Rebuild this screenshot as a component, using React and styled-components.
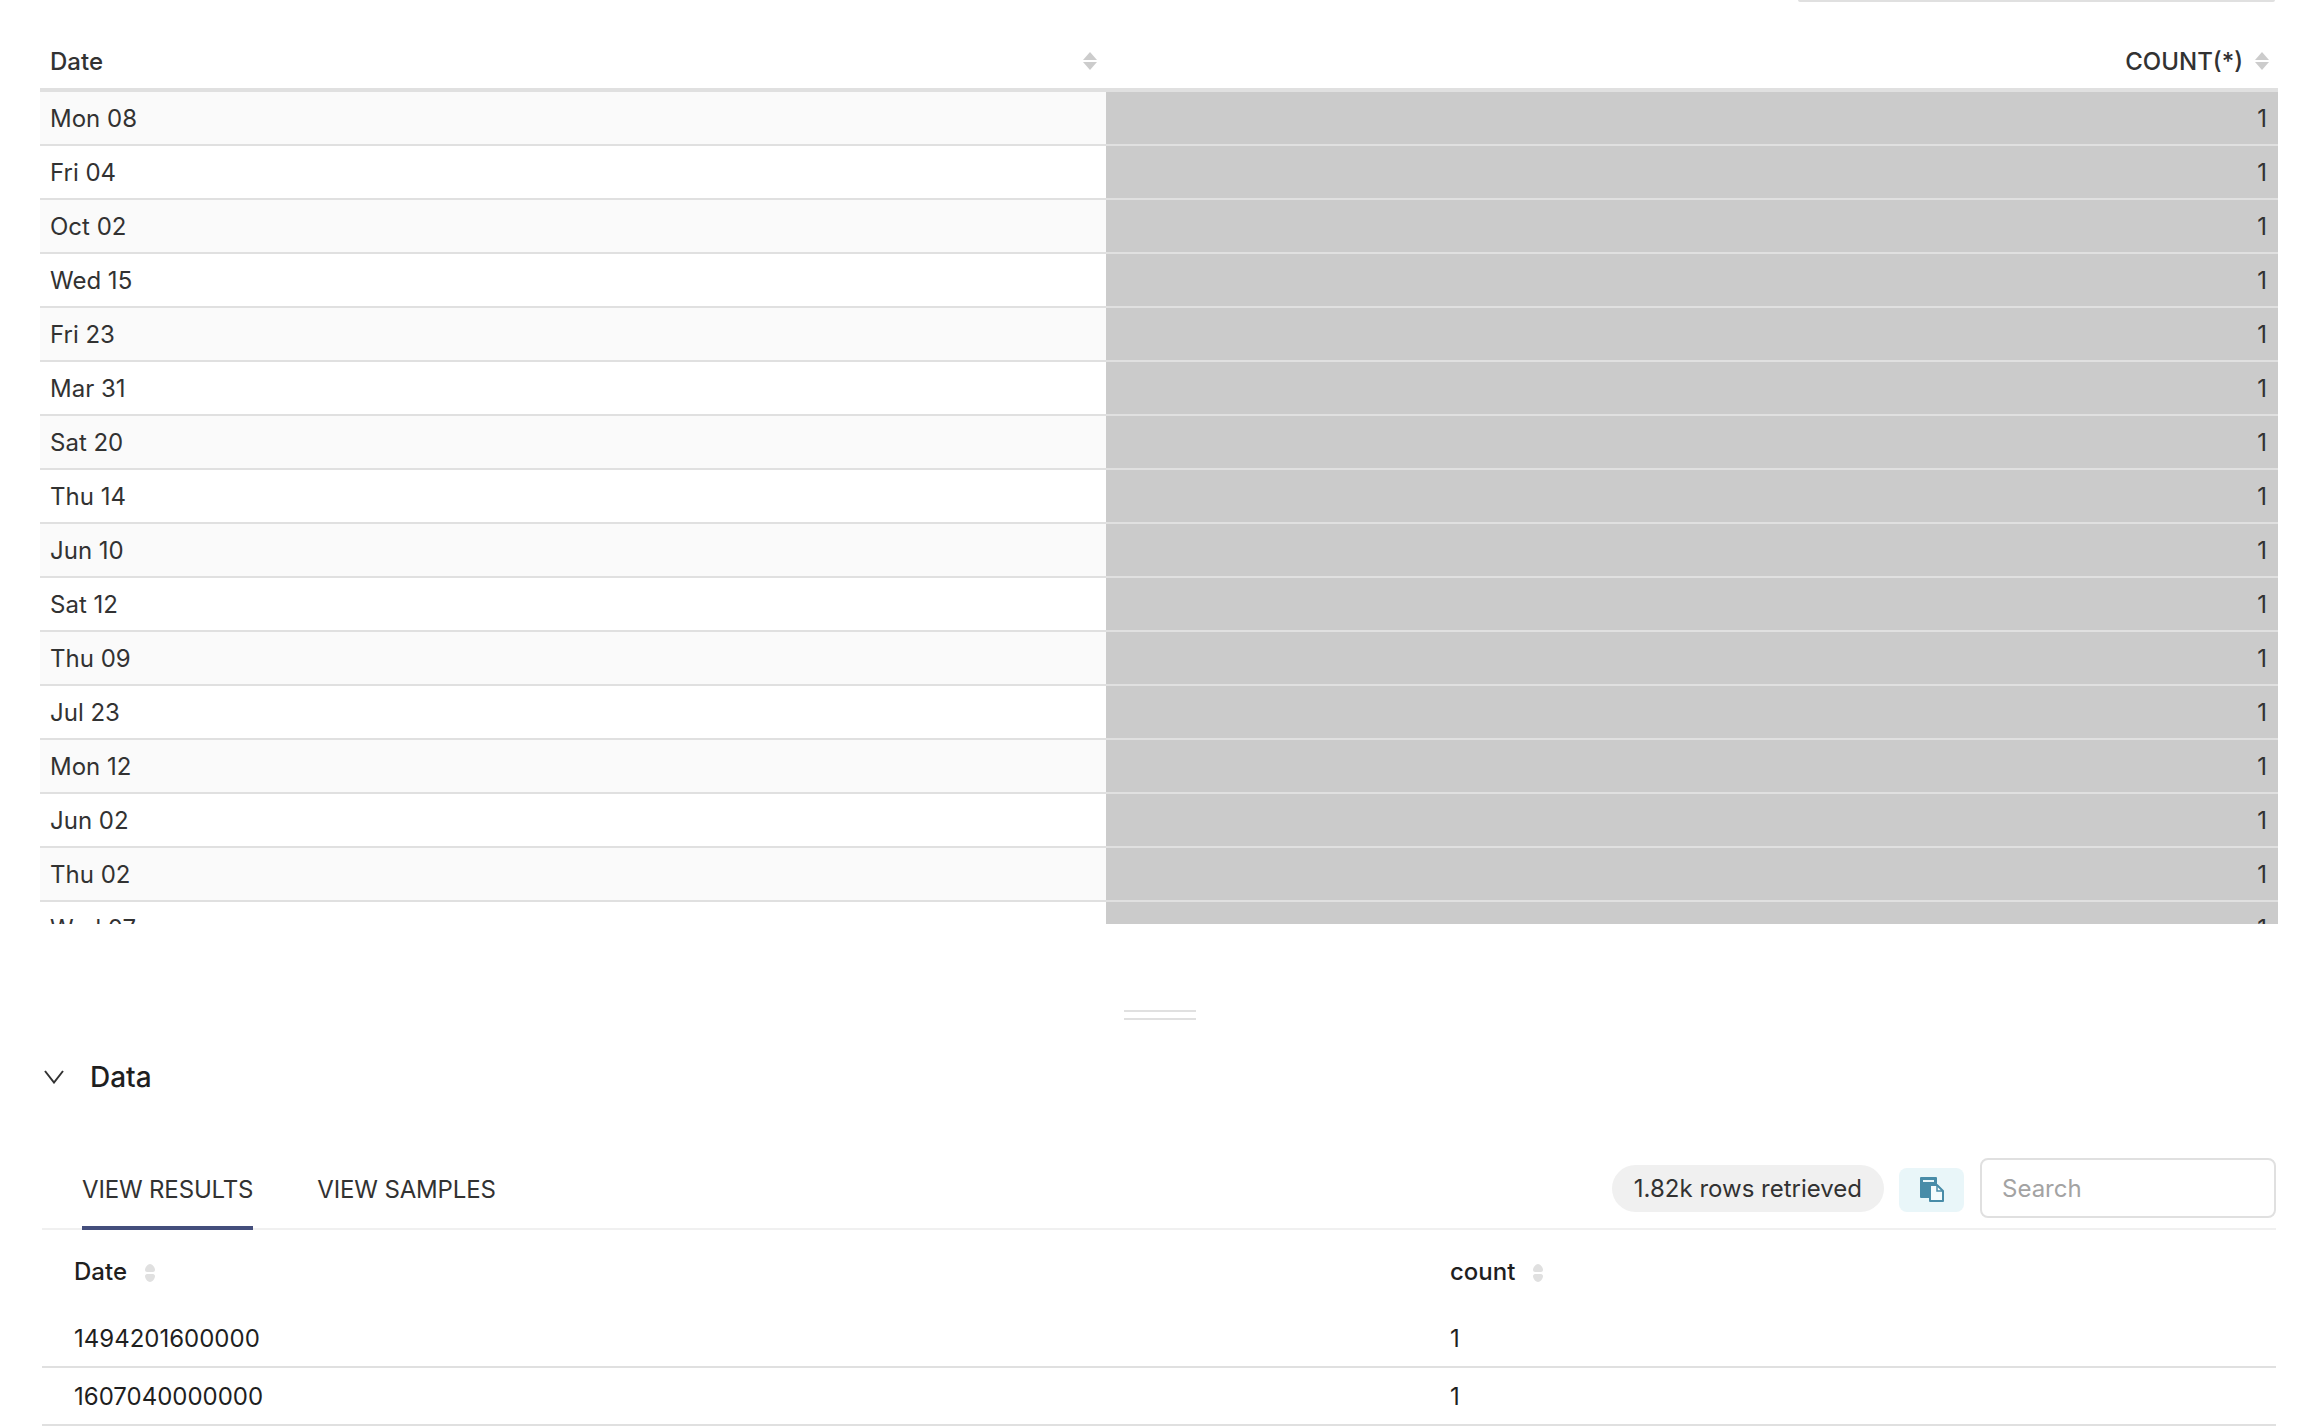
import React from 'react'
import styled, { createGlobalStyle } from 'styled-components'

const GlobalStyle = createGlobalStyle`
  html, body {
    margin: 0;
    padding: 0;
    background: #fff;
    font-family: Inter, "Noto Sans", sans-serif;
    color: #323232;
  }
`

const Page = styled.div`
  width: 2320px;
  height: 1426px;
  overflow: hidden;
  display: flex;
  flex-direction: column;
`

const CutOffInput = styled.div`
  align-self: flex-end;
  width: 477px;
  height: 2px;
  margin-right: 45px;
  background: #e0e0e0;
  border-radius: 0 0 4px 4px;
`

const ChartTable = styled.div`
  width: 2238px;
  height: 922px;
  margin-left: 40px;
  overflow: hidden;
`

const ChartHead = styled.div`
  display: grid;
  grid-template-columns: 1066px 1172px;
  height: 86px;
  border-bottom: 4px solid #e0e0e0;
  font-size: 24px;
  font-weight: 550;
`

const ChartHeadCell = styled.div`
  display: flex;
  align-items: center;
  justify-content: ${(p) => (p.$right ? 'flex-end' : 'space-between')};
  gap: 12px;
  padding: 32px 9px 0 10px;
`

const ChartRow = styled.div`
  display: grid;
  grid-template-columns: 1066px 1172px;
  height: 52px;
  border-bottom: 2px solid #e0e0e0;
  background: ${(p) => (p.$odd ? '#fafafa' : '#fff')};
  font-size: 24px;
`

const DateCell = styled.div`
  display: flex;
  align-items: center;
  padding-left: 10px;
`

const BarCell = styled.div`
  display: flex;
  align-items: center;
  justify-content: flex-end;
  padding-right: 11px;
  background: #cbcbcb;
`

const Splitter = styled.div`
  align-self: center;
  width: 72px;
  height: 6px;
  margin-top: 86px;
  border-top: 2px solid #e0e0e0;
  border-bottom: 2px solid #e0e0e0;
`

const SectionHeader = styled.div`
  display: flex;
  align-items: center;
  gap: 26px;
  height: 40px;
  margin: 37px 0 0 44px;
  font-size: 28px;
  font-weight: 550;
  color: #1f1f1f;
`

const TabBar = styled.div`
  display: flex;
  align-items: flex-end;
  justify-content: space-between;
  width: 2234px;
  height: 72px;
  margin: 59px 0 0 42px;
  border-bottom: 2px solid #f0f0f0;
`

const Tabs = styled.div`
  display: flex;
  gap: 64px;
  padding-left: 40px;
`

const Tab = styled.div`
  height: 72px;
  margin-bottom: -2px;
  box-sizing: border-box;
  padding-top: 16px;
  font-size: 24px;
  line-height: 32px;
  letter-spacing: -0.15px;
  color: #323232;
  border-bottom: 4px solid ${(p) => (p.$active ? '#444e7c' : 'transparent')};
`

const Tools = styled.div`
  display: flex;
  align-items: center;
  height: 60px;
  margin-bottom: 10px;
`

const RowCount = styled.div`
  display: flex;
  align-items: center;
  height: 47px;
  padding: 0 22px;
  border-radius: 24px;
  background: #f0f0f0;
  font-size: 24px;
  margin-right: 15px;
`

const CopyButton = styled.div`
  display: flex;
  align-items: center;
  justify-content: center;
  width: 65px;
  height: 44px;
  margin: 3px 16px 0 0;
  border-radius: 8px;
  background: #e9f6f9;
`

const SearchBox = styled.div`
  display: flex;
  align-items: center;
  box-sizing: border-box;
  width: 296px;
  height: 60px;
  padding-left: 20px;
  border: 2px solid #e0e0e0;
  border-radius: 8px;
  font-size: 24px;
  color: #a3a3a3;
`

const ResultTable = styled.div`
  width: 2234px;
  margin-left: 42px;
`

const ResultHead = styled.div`
  display: grid;
  grid-template-columns: 1376px 1fr;
  align-items: center;
  height: 80px;
  padding: 2px 0 0 32px;
  box-sizing: border-box;
  font-size: 24px;
  font-weight: 550;
  color: #1f1f1f;
`

const ResultHeadCell = styled.div`
  display: flex;
  align-items: center;
  gap: 18px;
`

const ResultRow = styled.div`
  display: grid;
  grid-template-columns: 1376px 1fr;
  align-items: center;
  height: 56px;
  padding-left: 32px;
  border-bottom: 2px solid #e0e0e0;
  font-size: 24px;
  color: #1f1f1f;
`

const SoftSort = styled.svg`
  margin-top: 3px;
`

const SortIcon = () => (
  <svg width="14" height="18" viewBox="0 0 14 18">
    <path d="M7 0 L14 8 H0 Z" fill="#cccccc" />
    <path d="M7 18 L14 10 H0 Z" fill="#cccccc" />
  </svg>
)

const SoftSortIcon = () => (
  <SoftSort width="10" height="18" viewBox="0 0 10 18">
    <path d="M5 0 C7 0 10 3 10 6 C10 7 9 8 8 8 H2 C1 8 0 7 0 6 C0 3 3 0 5 0 Z" fill="#e0e0e0" />
    <path d="M5 18 C7 18 10 15 10 12 C10 11 9 10 8 10 H2 C1 10 0 11 0 12 C0 15 3 18 5 18 Z" fill="#e0e0e0" />
  </SoftSort>
)

const ChevronIcon = () => (
  <svg width="20" height="14" viewBox="0 0 20 14">
    <path d="M1 1 L10 12.5 L19 1" fill="none" stroke="#323232" strokeWidth="2" />
  </svg>
)

const CopyIcon = () => (
  <svg width="24" height="25" viewBox="0 0 24 25">
    <path d="M1 0 H16 A1 1 0 0 1 17 1 V21 H1 A1 1 0 0 1 0 20 V1 A1 1 0 0 1 1 0 Z" fill="#488ca8" />
    <rect x="3" y="3" width="11" height="2" fill="#e9f6f9" />
    <path d="M10 8 H17 L23 14 V24 H10 Z" fill="#f4fbfc" stroke="#488ca8" strokeWidth="2" strokeLinejoin="round" />
    <path d="M17 8 V14 H23" fill="none" stroke="#488ca8" strokeWidth="1.5" />
  </svg>
)

const dates = [
  'Mon 08', 'Fri 04', 'Oct 02', 'Wed 15', 'Fri 23', 'Mar 31', 'Sat 20', 'Thu 14',
  'Jun 10', 'Sat 12', 'Thu 09', 'Jul 23', 'Mon 12', 'Jun 02', 'Thu 02', 'Wed 07',
]

const results = ['1494201600000', '1607040000000']

function App() {
  return (
    <Page>
      <GlobalStyle />
      <CutOffInput />

      <ChartTable>
        <ChartHead>
          <ChartHeadCell>
            Date
            <SortIcon />
          </ChartHeadCell>
          <ChartHeadCell $right>
            COUNT(*)
            <SortIcon />
          </ChartHeadCell>
        </ChartHead>
        {dates.map((date, i) => (
          <ChartRow key={date} $odd={i % 2 === 0}>
            <DateCell>{date}</DateCell>
            <BarCell>1</BarCell>
          </ChartRow>
        ))}
      </ChartTable>

      <Splitter />

      <SectionHeader>
        <ChevronIcon />
        Data
      </SectionHeader>

      <TabBar>
        <Tabs>
          <Tab $active>VIEW RESULTS</Tab>
          <Tab>VIEW SAMPLES</Tab>
        </Tabs>
        <Tools>
          <RowCount>1.82k rows retrieved</RowCount>
          <CopyButton>
            <CopyIcon />
          </CopyButton>
          <SearchBox>Search</SearchBox>
        </Tools>
      </TabBar>

      <ResultTable>
        <ResultHead>
          <ResultHeadCell>
            Date
            <SoftSortIcon />
          </ResultHeadCell>
          <ResultHeadCell>
            count
            <SoftSortIcon />
          </ResultHeadCell>
        </ResultHead>
        {results.map((value) => (
          <ResultRow key={value}>
            <div>{value}</div>
            <div>1</div>
          </ResultRow>
        ))}
      </ResultTable>
    </Page>
  )
}

export default App
